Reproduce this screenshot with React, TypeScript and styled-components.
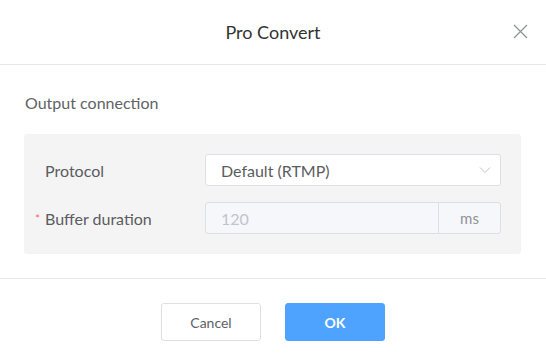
import React from "react";
import styled, { createGlobalStyle } from "styled-components";

const GlobalStyle = createGlobalStyle`
  html, body {
    margin: 0;
    padding: 0;
    background: #ffffff;
  }
  body {
    font-family: Lato, "Open Sans", "Liberation Sans", sans-serif;
    color: #333333;
  }
  * { box-sizing: border-box; }
`;

const Dialog = styled("div")`
  width: 546px;
  height: 358px;
  background: #ffffff;
  display: flex;
  flex-direction: column;
  overflow: hidden;
`;

const Header = styled("div")`
  position: relative;
  height: 65px;
  display: flex;
  align-items: center;
  justify-content: center;
  border-bottom: 1px solid #e4e7ed;
`;

const Title = styled("h2")`
  margin: 0;
  font-size: 18px;
  font-weight: 400;
  color: #333333;
`;

const CloseButton = styled("button")`
  position: absolute;
  right: 18px;
  top: 23px;
  width: 16px;
  height: 16px;
  padding: 0;
  border: none;
  background: transparent;
  cursor: pointer;
  display: flex;
  align-items: center;
  justify-content: center;
`;

const Body = styled("div")`
  padding: 27px 25px 24px 24px;
  border-bottom: 1px solid #e4e7ed;
`;

const SectionTitle = styled("div")`
  font-size: 16px;
  line-height: 22px;
  color: #606266;
  padding-left: 1px;
  margin-bottom: 20px;
`;

const Panel = styled("div")`
  background: #f4f4f5;
  border-radius: 3px;
  padding: 20px 20px 20px 21px;
  display: flex;
  flex-direction: column;
  gap: 16px;
`;

const Row = styled("div")`
  display: grid;
  grid-template-columns: 160px 1fr;
  align-items: center;
`;

const Label = styled("label")<{ required?: boolean }>`
  position: relative;
  font-size: 16px;
  color: #5a5c60;
  &::before {
    content: ${(props) => (props.required ? '"*"' : "none")};
    position: absolute;
    left: -10px;
    top: 2px;
    color: #f56c6c;
    font-size: 12px;
  }
`;

const Select = styled("div")`
  height: 32px;
  background: #ffffff;
  border: 1px solid #dcdfe6;
  border-radius: 3px;
  display: flex;
  align-items: center;
  justify-content: space-between;
  padding: 0 9px 0 15px;
  font-size: 16px;
  color: #5a5c60;
`;

const InputGroup = styled("div")`
  height: 32px;
  display: flex;
  border: 1px solid #dcdfe6;
  border-radius: 3px;
  background: #f5f7fa;
  overflow: hidden;
`;

const Input = styled("input")`
  flex: 1;
  min-width: 0;
  border: none;
  background: transparent;
  padding: 0 15px;
  font-family: inherit;
  font-size: 16px;
  color: #c0c4cc;
  outline: none;
`;

const Append = styled("div")`
  width: 62px;
  border-left: 1px solid #dcdfe6;
  display: flex;
  align-items: center;
  justify-content: center;
  font-size: 15px;
  color: #909399;
`;

const Footer = styled("div")`
  display: flex;
  justify-content: center;
  gap: 24px;
  padding-top: 24px;
`;

const Button = styled("button")<{ primary?: boolean }>`
  width: 100px;
  height: 38px;
  border-radius: 3px;
  font-family: inherit;
  font-size: 14px;
  cursor: pointer;
  border: 1px solid ${(props) => (props.primary ? "#4da3ff" : "#dcdfe6")};
  background: ${(props) => (props.primary ? "#4da3ff" : "#ffffff")};
  color: ${(props) => (props.primary ? "#ffffff" : "#606266")};
  font-weight: ${(props) => (props.primary ? 700 : 400)};
`;

export default function App() {
  return (
    <>
      <GlobalStyle />
      <Dialog>
        <Header>
          <Title>Pro Convert</Title>
          <CloseButton aria-label="Close">
            <svg width="15" height="15" viewBox="0 0 15 15">
              <path d="M1 1 L14 14 M14 1 L1 14" stroke="#909399" strokeWidth="1.3" fill="none" />
            </svg>
          </CloseButton>
        </Header>
        <Body>
          <SectionTitle>Output connection</SectionTitle>
          <Panel>
            <Row>
              <Label>Protocol</Label>
              <Select>
                <span>Default (RTMP)</span>
                <svg width="12" height="8" viewBox="0 0 12 8">
                  <path d="M1 1.5 L6 6.5 L11 1.5" stroke="#c0c4cc" strokeWidth="1" fill="none" />
                </svg>
              </Select>
            </Row>
            <Row>
              <Label required>Buffer duration</Label>
              <InputGroup>
                <Input value="120" disabled readOnly />
                <Append>ms</Append>
              </InputGroup>
            </Row>
          </Panel>
        </Body>
        <Footer>
          <Button>Cancel</Button>
          <Button primary>OK</Button>
        </Footer>
      </Dialog>
    </>
  );
}
